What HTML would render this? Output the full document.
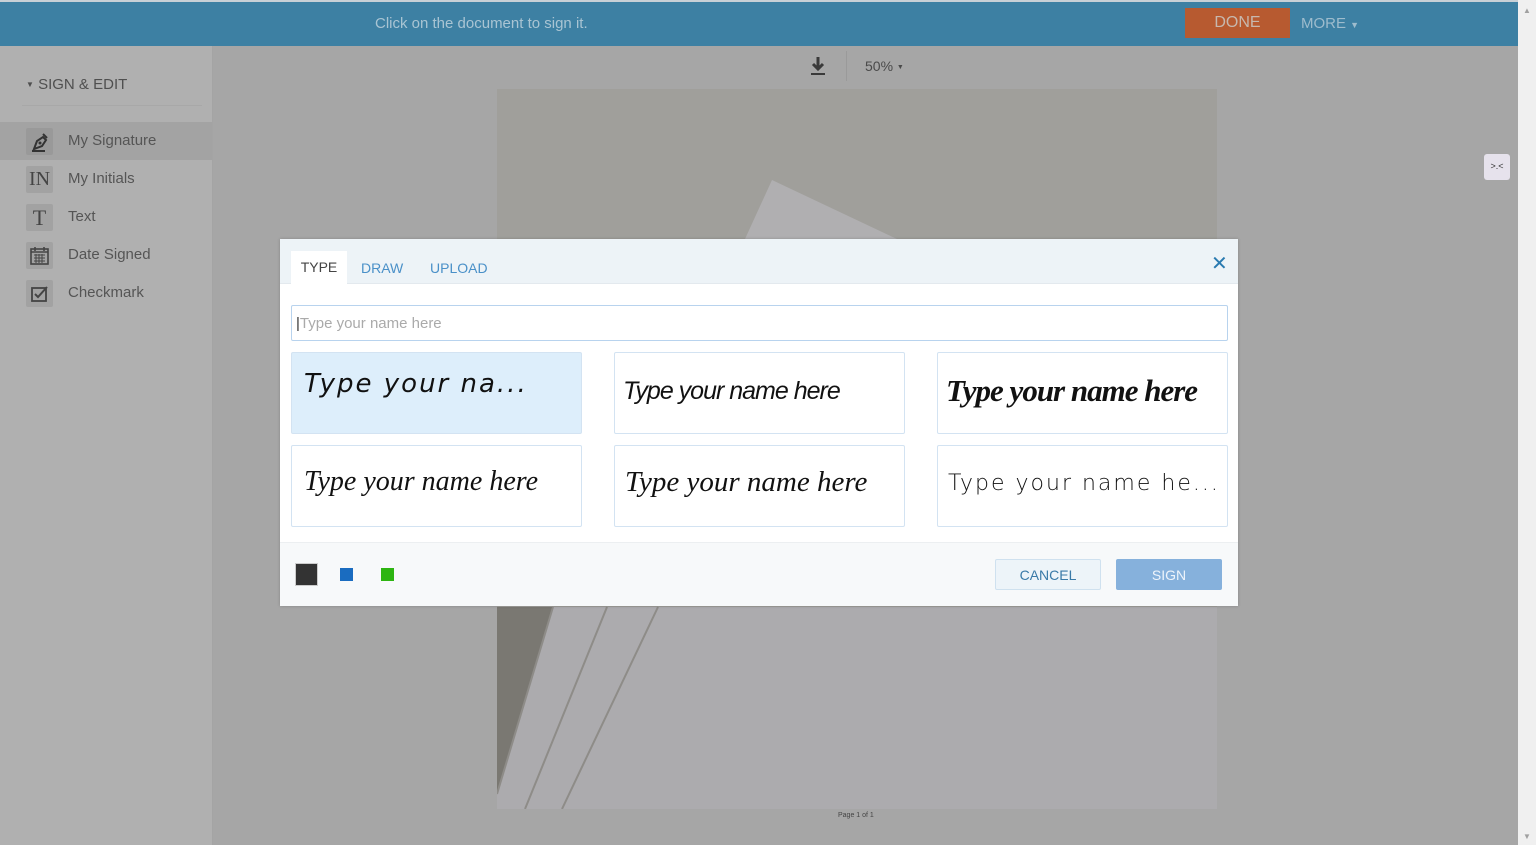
<!DOCTYPE html>
<html><head><meta charset="utf-8"><style>
*{box-sizing:border-box;margin:0;padding:0}
body{width:1536px;height:845px;overflow:hidden;position:relative;background:#a6a6a6;font-family:"Liberation Sans",sans-serif}
.abs{position:absolute}
.top{left:0;top:0;width:1518px;height:46px;background:#3d80a3;border-top:2px solid #c8d0d6}
.side{left:0;top:46px;width:213px;height:799px;background:#b0b0b0;border-right:1px solid #a4a4a4}
.item{position:absolute;left:0;width:212px;height:38px;font-size:15px;color:#555}
.item .ic{position:absolute;left:26px;top:6px;width:27px;height:27px;background:#a2a2a2;border-radius:2px;color:#444;text-align:center;font-family:"Liberation Serif",serif;font-size:20px;line-height:27px}
.item span.t{position:absolute;left:68px;top:10px}
.card{position:absolute;width:291px;height:82px;border:1px solid #d3e3f2;background:#fff;border-radius:2px;overflow:hidden;white-space:nowrap;color:#111}
</style></head><body>
<div class="abs top"></div>
<div class="abs" style="left:375px;top:15px;color:#a9c4d3;font-size:15px">Click on the document to sign it.</div>
<div class="abs" style="left:1185px;top:8px;width:105px;height:30px;background:#b75a30;color:#c7b8ae;font-size:16px;text-align:center;line-height:30px">DONE</div>
<div class="abs" style="left:1301px;top:15px;color:#9ebccd;font-size:15px">MORE <span style="font-size:9px">▼</span></div>
<div class="abs" style="left:1518px;top:0;width:18px;height:845px;background:#f0f0f0"></div>
<div class="abs" style="left:1523px;top:6px;color:#a0a0a0;font-size:8px">▲</div>
<div class="abs" style="left:1523px;top:832px;color:#a0a0a0;font-size:8px">▼</div>

<div class="abs side"></div>
<div class="abs" style="left:26px;top:76px;font-size:15px;color:#4f4f4f"><span style="font-size:8px;vertical-align:2px">▼</span> SIGN &amp; EDIT</div>
<div class="abs" style="left:22px;top:105px;width:180px;height:1px;background:#a8a8a8"></div>
<div class="item" style="top:122px;background:#a3a3a3"><div class="ic" style="background:#999"><svg width="27" height="27" viewBox="0 0 27 27"><path d="M8 21l3-8 6-4 3 3-4 6z" fill="none" stroke="#333" stroke-width="2"/><path d="M17 6l4 4M6 23h13" stroke="#333" stroke-width="2"/><circle cx="14" cy="15" r="1.5" fill="#333"/></svg></div><span class="t">My Signature</span></div>
<div class="item" style="top:160px"><div class="ic">IN</div><span class="t">My Initials</span></div>
<div class="item" style="top:198px"><div class="ic" style="font-size:22px">T</div><span class="t">Text</span></div>
<div class="item" style="top:236px"><div class="ic"><svg width="27" height="27" viewBox="0 0 27 27"><rect x="5" y="7" width="17" height="15" fill="none" stroke="#444" stroke-width="1.6"/><path d="M5 10h17M9 5v4M18 5v4" stroke="#444" stroke-width="1.6"/><path d="M8 13h11M8 16h11M8 19h11M10 12v9M13 12v9M16 12v9" stroke="#444" stroke-width="1"/></svg></div><span class="t">Date Signed</span></div>
<div class="item" style="top:274px"><div class="ic"><svg width="27" height="27" viewBox="0 0 27 27"><rect x="6" y="8" width="14" height="13" fill="none" stroke="#444" stroke-width="1.8"/><path d="M9 14l3 3 9-10" fill="none" stroke="#444" stroke-width="2"/></svg></div><span class="t">Checkmark</span></div>

<svg class="abs" style="left:808px;top:55px" width="20" height="22"><path d="M10 2v11M5 9l5 5 5-5" stroke="#3a3a3a" stroke-width="3" fill="none"/><path d="M3 19h14" stroke="#3a3a3a" stroke-width="2"/></svg>
<div class="abs" style="left:846px;top:51px;width:1px;height:30px;background:#9a9a9a"></div>
<div class="abs" style="left:865px;top:58px;font-size:14px;color:#4a4a4a">50% <span style="font-size:7px;vertical-align:2px">▼</span></div>

<svg class="abs" style="left:497px;top:89px" width="720" height="720">
<rect width="720" height="720" fill="#a09f9b"/>
<polygon points="275,91 400,150 248,150" fill="#b0afb1"/>
<rect y="518" width="720" height="202" fill="#acabae"/>
<polygon points="0,518 56,518 0,705" fill="#7a7872"/>
<path d="M56 518L0 705M110 518L28 720M161 518L65 720" stroke="#8e8c88" stroke-width="2" fill="none"/>
</svg>
<div class="abs" style="left:838px;top:812px;font-size:7px;color:#444">Page 1 of 1</div>
<div class="abs" style="left:1484px;top:154px;width:26px;height:26px;background:#e6e2ec;border-radius:3px;font-size:9px;text-align:center;line-height:24px;color:#333">&gt;.&lt;</div>

<div class="abs" style="left:280px;top:239px;width:958px;height:367px;background:#fff;box-shadow:0 0 3px rgba(0,0,0,.2)">
 <div class="abs" style="left:0;top:0;width:958px;height:45px;background:#edf3f7;border-bottom:1px solid #e3e9ee"></div>
 <div class="abs" style="left:11px;top:12px;width:56px;height:34px;background:#fff;font-size:14px;color:#444;text-align:center;line-height:33px">TYPE</div>
 <div class="abs" style="left:81px;top:21px;font-size:14px;color:#4a90c8">DRAW</div>
 <div class="abs" style="left:150px;top:21px;font-size:14px;color:#4a90c8">UPLOAD</div>
 <div class="abs" style="left:931px;top:12px;font-size:20px;color:#2a7ab0">✕</div>
 <div class="abs" style="left:11px;top:66px;width:937px;height:36px;border:1px solid #b8d3ee;border-radius:2px;font-size:15px;color:#aaa;padding:9px 0 0 4px"><span style="color:#333">|</span>Type your name here</div>
 <div class="card" style="left:11px;top:113px;background:#ddeefb;font-family:'DejaVu Sans',sans-serif;font-style:italic;font-size:26px;padding:16px 0 0 12px;letter-spacing:2px">Type your na...</div>
 <div class="card" style="left:334px;top:113px;font-family:'Liberation Sans',sans-serif;font-style:italic;font-size:25px;padding:24px 0 0 8px;letter-spacing:-1px">Type your name here</div>
 <div class="card" style="left:657px;top:113px;font-family:'Liberation Serif',serif;font-style:italic;font-weight:bold;font-size:31px;padding:20px 0 0 8px;letter-spacing:-1px">Type your name here</div>
 <div class="card" style="left:11px;top:206px;font-family:'Liberation Serif',serif;font-style:italic;font-size:28px;padding:20px 0 0 12px">Type your name here</div>
 <div class="card" style="left:334px;top:206px;font-family:'Liberation Serif',serif;font-style:italic;font-size:29px;padding:20px 0 0 10px">Type your name here</div>
 <div class="card" style="left:657px;top:206px;font-family:'DejaVu Sans',sans-serif;font-size:22px;padding:25px 0 0 10px;letter-spacing:2px;font-weight:200">Type your name he...</div>
 <div class="abs" style="left:0;top:303px;width:958px;height:64px;background:#f7f9fa;border-top:1px solid #eceff1"></div>
 <div class="abs" style="left:15px;top:324px;width:23px;height:23px;background:#333;border:1px solid #ccc"></div>
 <div class="abs" style="left:60px;top:329px;width:13px;height:13px;background:#1a6cc0"></div>
 <div class="abs" style="left:101px;top:329px;width:13px;height:13px;background:#2db511"></div>
 <div class="abs" style="left:715px;top:320px;width:106px;height:31px;border:1px solid #cfe1ef;background:#edf4f9;color:#3a7aa8;font-size:14px;text-align:center;line-height:30px;border-radius:2px">CANCEL</div>
 <div class="abs" style="left:836px;top:320px;width:106px;height:31px;background:#86b1dc;color:#eef4fb;font-size:14px;text-align:center;line-height:32px;border-radius:2px">SIGN</div>
</div>
</body></html>
